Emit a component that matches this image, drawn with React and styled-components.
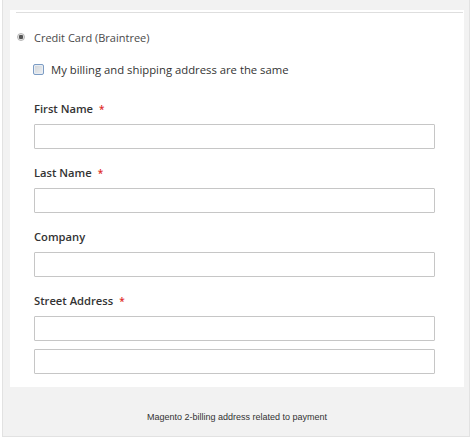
import styled, { createGlobalStyle } from "styled-components";

const GlobalStyle = createGlobalStyle`
  body {
    margin: 0;
    background: #ffffff;
    font-family: "Open Sans", "Liberation Sans", sans-serif;
    color: #333333;
  }
`;

const Figure = styled.figure`
  margin: 0 0 0 2px;
  width: 468px;
  box-sizing: border-box;
  background: #f2f2f2;
  border: 1px solid #e2e2e2;
  border-top: 0;
  padding: 10px 5px 0 7px;
`;

const Panel = styled.div`
  background: #ffffff;
  padding: 2px 1px 13px 6px;
`;

const Divider = styled.div`
  border-top: 1px solid #dedede;
`;

const MethodRow = styled.div`
  display: flex;
  align-items: center;
  gap: 9px;
  height: 16px;
  margin-top: 16px;
  padding-left: 1px;
  font-size: 11px;
  color: #4a4a4a;
`;

const Radio = styled.span`
  width: 8px;
  height: 8px;
  border-radius: 50%;
  box-sizing: border-box;
  border: 1px solid #b5b5b5;
  background: radial-gradient(circle, #555 0 2px, #e6e6e6 2.5px);
`;

const CheckRow = styled.label`
  display: flex;
  align-items: center;
  gap: 7px;
  height: 16px;
  margin-top: 16px;
  padding-left: 17px;
  font-size: 11.3px;
  color: #333333;
`;

const CheckBox = styled.span`
  width: 11px;
  height: 11px;
  box-sizing: border-box;
  border: 1px solid #7c9cc4;
  border-radius: 2px;
  background: linear-gradient(135deg, #cfd3d8, #eef0f2);
  box-shadow: inset 0 0 0 1px #e8edf3;
`;

const Form = styled.div`
  display: flex;
  flex-direction: column;
  gap: 16px;
  margin-top: 24px;
  padding-left: 18px;
  padding-right: 28px;
`;

const Field = styled.div`
  display: flex;
  flex-direction: column;
  gap: 7px;
`;

const Label = styled.div`
  font-size: 11.2px;
  font-weight: 600;
  line-height: 16px;
  color: #333333;
`;

const Required = styled.span`
  color: #e02b27;
  margin-left: 6px;
  font-size: 10px;
`;

const Inputs = styled.div`
  display: flex;
  flex-direction: column;
  gap: 8px;
`;

const Input = styled.input`
  display: block;
  box-sizing: border-box;
  width: 100%;
  height: 25px;
  margin: 0;
  border: 1px solid #c6c6c6;
  border-radius: 1px;
  background: #ffffff;
  outline: 0;
`;

const Caption = styled.figcaption`
  padding: 23px 0 12px;
  text-align: center;
  font-family: "Liberation Sans", Arial, sans-serif;
  font-size: 9px;
  line-height: 14px;
  color: #333333;
`;

const fields = [
  { label: "First Name", required: true, lines: 1 },
  { label: "Last Name", required: true, lines: 1 },
  { label: "Company", required: false, lines: 1 },
  { label: "Street Address", required: true, lines: 2 },
];

export default function App() {
  return (
    <>
      <GlobalStyle />
      <Figure>
        <Panel>
          <Divider />
          <MethodRow>
            <Radio />
            Credit Card (Braintree)
          </MethodRow>
          <CheckRow>
            <CheckBox />
            My billing and shipping address are the same
          </CheckRow>
          <Form>
            {fields.map((f) => (
              <Field key={f.label}>
                <Label>
                  {f.label}
                  {f.required && <Required>*</Required>}
                </Label>
                <Inputs>
                  {Array.from({ length: f.lines }).map((_, i) => (
                    <Input key={i} type="text" />
                  ))}
                </Inputs>
              </Field>
            ))}
          </Form>
        </Panel>
        <Caption>Magento 2-billing address related to payment</Caption>
      </Figure>
    </>
  );
}
